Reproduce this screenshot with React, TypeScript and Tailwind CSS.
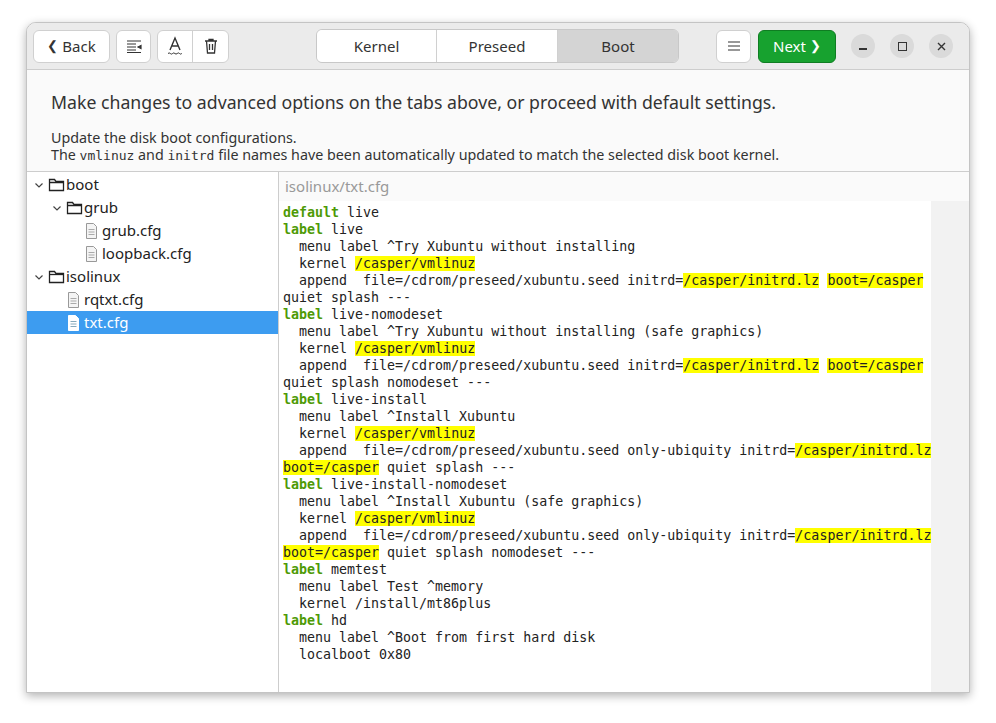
import React from 'react'

type Seg = { t: string; k?: 'kw' | 'hl' }

const K = (t: string): Seg => ({ t, k: 'kw' })
const H = (t: string): Seg => ({ t, k: 'hl' })
const P = (t: string): Seg => ({ t })

const APPEND = [P('  append  file=/cdrom/preseed/xubuntu.seed initrd='), H('/casper/initrd.lz'), P(' '), H('boot=/casper')]
const APPEND_U = [P('  append  file=/cdrom/preseed/xubuntu.seed only-ubiquity initrd='), H('/casper/initrd.lz')]
const KERNEL = [P('  kernel '), H('/casper/vmlinuz')]

const LINES: Seg[][] = [
  [K('default'), P(' live')],
  [K('label'), P(' live')],
  [P('  menu label ^Try Xubuntu without installing')],
  KERNEL,
  APPEND,
  [P('quiet splash ---')],
  [K('label'), P(' live-nomodeset')],
  [P('  menu label ^Try Xubuntu without installing (safe graphics)')],
  KERNEL,
  APPEND,
  [P('quiet splash nomodeset ---')],
  [K('label'), P(' live-install')],
  [P('  menu label ^Install Xubuntu')],
  KERNEL,
  APPEND_U,
  [H('boot=/casper'), P(' quiet splash ---')],
  [K('label'), P(' live-install-nomodeset')],
  [P('  menu label ^Install Xubuntu (safe graphics)')],
  KERNEL,
  APPEND_U,
  [H('boot=/casper'), P(' quiet splash nomodeset ---')],
  [K('label'), P(' memtest')],
  [P('  menu label Test ^memory')],
  [P('  kernel /install/mt86plus')],
  [K('label'), P(' hd')],
  [P('  menu label ^Boot from first hard disk')],
  [P('  localboot 0x80')],
]

const TREE = [
  { name: 'boot', depth: 0, folder: true },
  { name: 'grub', depth: 1, folder: true },
  { name: 'grub.cfg', depth: 2 },
  { name: 'loopback.cfg', depth: 2 },
  { name: 'isolinux', depth: 0, folder: true },
  { name: 'rqtxt.cfg', depth: 1 },
  { name: 'txt.cfg', depth: 1, selected: true },
]

function Folder() {
  return (
    <svg width="17" height="15" viewBox="0 0 17 15" fill="none" stroke="#222" strokeWidth="1.3">
      <path d="M1.5 2.5h5l1.5 2h7.5v9h-14z" />
      <path d="M1.5 5.5h14" />
    </svg>
  )
}

function FileIcon({ light }: { light?: boolean }) {
  const c = light ? '#fff' : '#999'
  return (
    <svg width="13" height="16" viewBox="0 0 13 16" fill={light ? '#fff' : '#f4f4f4'} stroke={c} strokeWidth="1">
      <path d="M1.5 0.5h7l3 3v12h-10z" />
      <path d="M3.5 6.5h6M3.5 9h6M3.5 11.5h6" stroke={light ? '#8ab' : '#aaa'} />
    </svg>
  )
}

function Chevron() {
  return (
    <svg width="12" height="12" viewBox="0 0 12 12" fill="none" stroke="#444" strokeWidth="1.2">
      <path d="M2.5 4.5l3.5 3.5 3.5-3.5" />
    </svg>
  )
}

export default function App() {
  return (
    <div className="w-[996px] h-[723px] bg-white pt-[22px] pl-[26px]" style={{ fontFamily: '"Noto Sans", "Open Sans", sans-serif' }}>
      <div className="w-[944px] h-[671px] bg-[#fafafa] rounded-t-[10px] border border-[#c4c4c4] shadow-[0_3px_10px_rgba(0,0,0,0.3)] flex flex-col overflow-hidden">
        {/* Header bar */}
        <div className="h-[47px] bg-[#ebebeb] border-b border-[#cdcdcd] flex items-center px-[6px] shrink-0">
          <button className="w-[77px] h-[33px] bg-white border border-[#d0d0d0] rounded-[6px] text-[15px] text-[#333] flex items-center justify-center gap-1">
            <span className="text-[13px]">❮</span>Back
          </button>
          <button className="ml-[6px] w-[35px] h-[33px] bg-white border border-[#d0d0d0] rounded-[6px] flex items-center justify-center">
            <svg width="16" height="14" viewBox="0 0 16 14" stroke="#333" strokeWidth="1.2">
              <path d="M1 2h14M1 5h9M1 8h9M1 11h9M1 13.5h14" />
              <path d="M15 6.5l-3 1.5 3 1.5z" fill="#333" />
            </svg>
          </button>
          <div className="ml-[6px] h-[33px] flex bg-white border border-[#d0d0d0] rounded-[6px]">
            <button className="w-[35px] flex items-center justify-center border-r border-[#d0d0d0]">
              <svg width="16" height="20" viewBox="0 0 16 20" fill="none" stroke="#333" strokeWidth="1.4">
                <path d="M3 14L8 2l5 12M5 10h6" />
                <path d="M1 17.5q1.2-1.2 2.3 0t2.3 0 2.3 0 2.3 0 2.3 0 2.3 0" strokeWidth="1" />
              </svg>
            </button>
            <button className="w-[35px] flex items-center justify-center">
              <svg width="14" height="16" viewBox="0 0 14 16" fill="none" stroke="#333" strokeWidth="1.3">
                <path d="M1 3h12M5 3V1.5h4V3M2.5 3l1 12h7l1-12M5.5 6v6M8.5 6v6" />
              </svg>
            </button>
          </div>
          <div className="ml-[87px] h-[34px] flex border border-[#c8c8c8] rounded-[6px] overflow-hidden text-[15px] text-[#333]">
            <div className="w-[120px] bg-white flex items-center justify-center border-r border-[#d0d0d0]">Kernel</div>
            <div className="w-[121px] bg-white flex items-center justify-center border-r border-[#d0d0d0]">Preseed</div>
            <div className="w-[120px] bg-[#d4d4d4] flex items-center justify-center">Boot</div>
          </div>
          <button className="ml-[37px] w-[35px] h-[33px] bg-white border border-[#d0d0d0] rounded-[6px] flex items-center justify-center">
            <svg width="12" height="10" viewBox="0 0 12 10" stroke="#333" strokeWidth="1.2">
              <path d="M0 1h12M0 5h12M0 9h12" />
            </svg>
          </button>
          <button className="ml-[7px] w-[78px] h-[33px] bg-[#17a22f] border border-[#0f7d22] rounded-[6px] text-[15px] text-white flex items-center justify-center gap-1">
            Next<span className="text-[13px]">❯</span>
          </button>
          <div className="ml-auto mr-[10px] flex gap-[15px]">
            <div className="w-[24px] h-[24px] rounded-full bg-[#dadada] flex items-center justify-center">
              <div className="w-[8px] h-[1.5px] bg-[#333] mt-[6px]" />
            </div>
            <div className="w-[24px] h-[24px] rounded-full bg-[#dadada] flex items-center justify-center">
              <div className="w-[9px] h-[9px] border-[1.5px] border-[#333]" />
            </div>
            <div className="w-[24px] h-[24px] rounded-full bg-[#dadada] flex items-center justify-center">
              <svg width="9" height="9" viewBox="0 0 9 9" stroke="#333" strokeWidth="1.4">
                <path d="M1 1l7 7M8 1L1 8" />
              </svg>
            </div>
          </div>
        </div>

        {/* Intro text */}
        <div className="px-[24px] pt-[19px] pb-[7px] text-[#333] shrink-0">
          <div className="text-[17.7px] leading-[26px]">Make changes to advanced options on the tabs above, or proceed with default settings.</div>
          <div className="mt-[14px] text-[14.3px] leading-[17px]">
            <div>Update the disk boot configurations.</div>
            <div>
              The <span className="font-['DejaVu_Sans_Mono'] text-[13px] leading-[17px]">vmlinuz</span> and{' '}
              <span className="font-['DejaVu_Sans_Mono'] text-[13px] leading-[17px]">initrd</span> file names have been automatically updated to match the selected disk boot kernel.
            </div>
          </div>
        </div>

        {/* Panes */}
        <div className="flex-1 flex border-t border-[#cdcdcd] min-h-0">
          <div className="w-[252px] bg-white border-r border-[#cdcdcd] pt-[1px] shrink-0">
            {TREE.map((n) => (
              <div
                key={n.name}
                className={`h-[23px] flex items-center text-[15px] ${n.selected ? 'bg-[#3d9cf0] text-white' : 'text-[#222]'}`}
                style={{ paddingLeft: 6 + n.depth * 18 }}
              >
                {n.folder ? (
                  <>
                    <Chevron />
                    <span className="ml-[3px] mr-[1px] flex"><Folder /></span>
                  </>
                ) : (
                  <span className="ml-[16px] mr-[4px] flex"><FileIcon light={n.selected} /></span>
                )}
                {n.name}
              </div>
            ))}
          </div>
          <div className="flex-1 flex flex-col min-w-0">
            <div className="h-[29px] bg-[#fafafa] text-[15px] text-[#999] flex items-center px-[6px] shrink-0">isolinux/txt.cfg</div>
            <div className="flex-1 flex bg-white">
              <div className="flex-1 pl-[4px] pt-[3px] font-['DejaVu_Sans_Mono'] text-[13.3px] leading-[17px] text-[#222] whitespace-pre">
                {LINES.map((line, i) => (
                  <div key={i}>
                    {line.map((s, j) => (
                      <span
                        key={j}
                        className={s.k === 'kw' ? 'text-[#4e9a06] font-bold' : s.k === 'hl' ? 'bg-[#ffff00]' : ''}
                      >
                        {s.t}
                      </span>
                    ))}
                  </div>
                ))}
              </div>
              <div className="w-[45px] bg-[#f2f2f2] shrink-0" />
            </div>
          </div>
        </div>
      </div>
    </div>
  )
}
